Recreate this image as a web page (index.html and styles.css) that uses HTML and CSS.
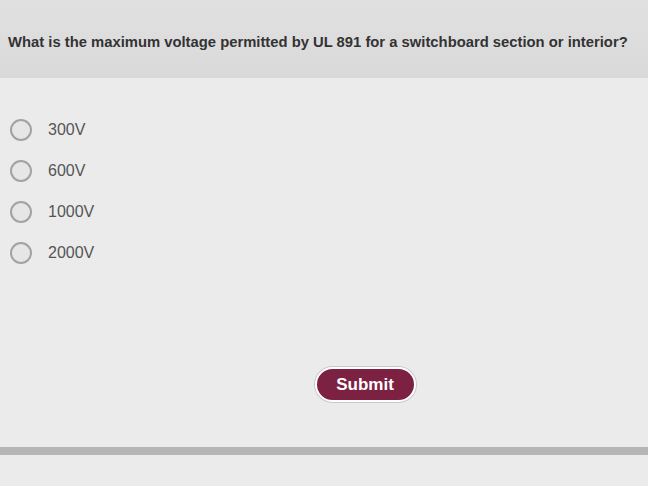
FILE: index.html
```html
<!DOCTYPE html>
<html lang="en">
<head>
    <meta charset="UTF-8">
    <title>Question</title>
    <link rel="stylesheet" href="styles.css">
</head>
<body>
    <header class="question">
        <h1>What is the maximum voltage permitted by UL 891 for a switchboard section or interior?</h1>
    </header>

    <section class="answers">
        <label class="choice"><span class="radio"></span><span class="label">300V</span></label>
        <label class="choice"><span class="radio"></span><span class="label">600V</span></label>
        <label class="choice"><span class="radio"></span><span class="label">1000V</span></label>
        <label class="choice"><span class="radio"></span><span class="label">2000V</span></label>
    </section>

    <div class="actions">
        <button class="submit">Submit</button>
    </div>

    <div class="divider"></div>
</body>
</html>
```

FILE: styles.css
```css
body {
    font-family: "Liberation Sans", Arial, sans-serif;
    margin: 0;
    padding: 0;
    background-color: #ebebec;
    color: #333;
    height: 486px;
    overflow: hidden;
}
.question {
    background: linear-gradient(#e2e1e2, #d9d9da);
    height: 78px;
    padding: 0 8px;
    display: flex;
    align-items: center;
    box-sizing: border-box;
    padding-top: 5px;
}
.question h1 {
    margin: 0;
    font-size: 14.8px;
    font-weight: bold;
    color: #333;
    white-space: nowrap;
}
.answers {
    display: flex;
    flex-direction: column;
    gap: 19px;
    padding: 41px 0 0 10px;
}
.choice {
    display: flex;
    align-items: center;
    gap: 16px;
    height: 22px;
}
.radio {
    width: 18px;
    height: 18px;
    border: 2px solid #a2a2a2;
    border-radius: 50%;
    background-color: #e6e6e6;
}
.label {
    font-size: 16px;
    color: #555;
}
.actions {
    display: flex;
    justify-content: center;
    padding: 103px 0 0 82px;
}
.submit {
    font-family: "Liberation Sans", Arial, sans-serif;
    font-size: 17px;
    font-weight: bold;
    color: #fff;
    background-color: #7c2142;
    border: 2px solid #fff;
    border-radius: 18px;
    width: 101px;
    height: 35px;
    box-shadow: 0 0 0 1px #c9c9c9;
}
.divider {
    margin-top: 45px;
    height: 8px;
    background-color: #b6b6b6;
}
```
